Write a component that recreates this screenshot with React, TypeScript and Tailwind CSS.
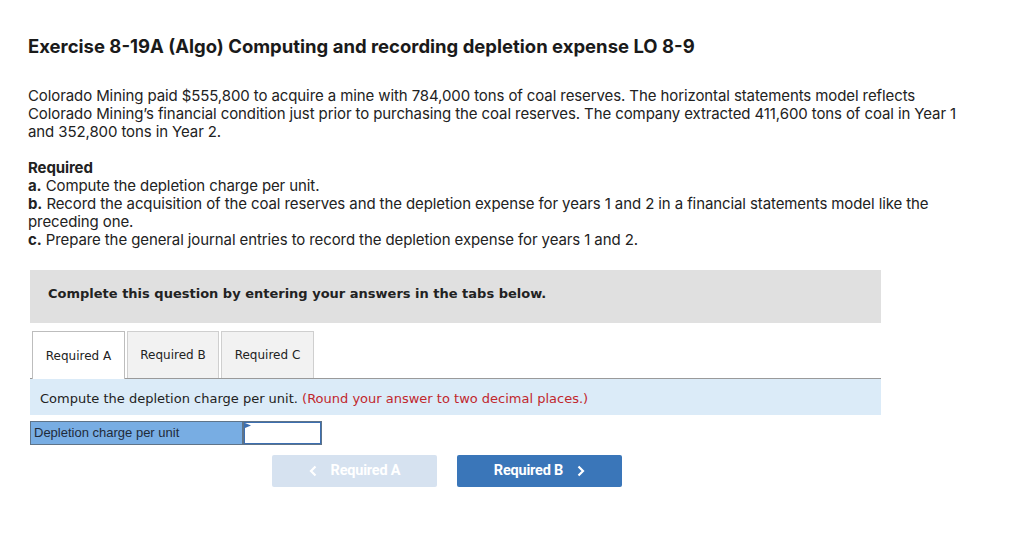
import React from "react";

const body = { fontFamily: 'Inter, "Lato", sans-serif' };
const verdana = { fontFamily: '"DejaVu Sans", Verdana, sans-serif' };

const App = () => {
	return (
		<div className="min-h-[555px] bg-white text-[#222]">
			<div className="pl-[28px] pr-[40px] pt-[34px]" style={body}>
				<h1 className="text-[18.5px] font-bold leading-[24px] text-[#1a1a1a]">
					Exercise 8-19A (Algo) Computing and recording depletion expense LO 8-9
				</h1>
				<p className="mt-[29px] text-[15px] leading-[18px] max-w-[935px] tracking-[-0.1px]">
					Colorado Mining paid $555,800 to acquire a mine with 784,000 tons of coal reserves. The horizontal statements model reflects Colorado Mining’s financial condition just prior to purchasing the coal reserves. The company extracted 411,600 tons of coal in Year 1 and 352,800 tons in Year 2.
				</p>
				<div className="mt-[18px] text-[15px] leading-[18px] max-w-[915px] tracking-[-0.1px]">
					<p className="font-bold">Required</p>
					<p>
						<span className="font-bold">a.</span> Compute the depletion charge per unit.
					</p>
					<p>
						<span className="font-bold">b.</span> Record the acquisition of the coal reserves and the depletion expense for years 1 and 2 in a financial statements model like the preceding one.
					</p>
					<p>
						<span className="font-bold">c.</span> Prepare the general journal entries to record the depletion expense for years 1 and 2.
					</p>
				</div>
			</div>

			<div className="ml-[30px] w-[851px]">
				<div
					className="mt-[21px] h-[53px] bg-[#e0e0e0] flex items-center pl-[18px] pb-[5px] text-[13px] font-bold text-[#222]"
					style={verdana}
				>
					Complete this question by entering your answers in the tabs below.
				</div>

				<div className="mt-[8px] flex gap-[2px] pl-[2px] border-b border-[#9a9a9a] text-[12px] text-[#222]" style={verdana}>
					<div className="w-[93px] h-[48px] flex items-center justify-center bg-white border border-b-0 border-[#bdbdbd] -mb-px">
						Required A
					</div>
					<div className="w-[92px] h-[47px] flex items-center justify-center bg-[#f2f2f2] border border-b-0 border-[#cfcfcf]">
						Required B
					</div>
					<div className="w-[93px] h-[47px] flex items-center justify-center bg-[#f2f2f2] border border-b-0 border-[#cfcfcf]">
						Required C
					</div>
				</div>

				<div className="h-[36px] bg-[#dbebf8] flex items-center pl-[10px] pt-[3px] text-[13px] text-[#222]" style={verdana}>
					Compute the depletion charge per unit.&nbsp;
					<span className="text-[#c1272d]">(Round your answer to two decimal places.)</span>
				</div>

				<div className="mt-[6px] flex h-[24px] w-[292px] border border-[#5f7489]">
					<div
						className="w-[213px] bg-[#78ade3] text-[13px] text-[#1f2b3a] flex items-center pl-[3px] border-r-2 border-[#5f7489]"
						style={{ fontFamily: '"Liberation Sans", Arial, sans-serif' }}
					>
						Depletion charge per unit
					</div>
					<div className="relative flex-1 bg-white border border-[#3d6fb1]">
						<svg className="absolute left-0 top-0" width="6" height="6" viewBox="0 0 6 6">
							<polygon points="0,0 6,2.5 0,5" fill="#3d6fb1" />
						</svg>
					</div>
				</div>

				<div className="mt-[10px] flex gap-[20px] pl-[242px]" style={{ fontFamily: 'Roboto, "Liberation Sans", sans-serif' }}>
					<button className="w-[165px] h-[32px] rounded-[2px] bg-[#d6e2f0] text-white text-[14.5px] font-bold flex items-center justify-center gap-[14px]">
						<svg width="8" height="12" viewBox="0 0 8 12">
							<path d="M6.5 1.5 L2 6 L6.5 10.5" stroke="white" strokeWidth="2.2" fill="none" />
						</svg>
						<span className="tracking-[-0.2px]">Required A</span>
					</button>
					<button className="w-[165px] h-[32px] rounded-[2px] bg-[#3a76b9] text-white text-[14.5px] font-bold flex items-center justify-center gap-[14px]">
						<span className="tracking-[-0.2px]">Required B</span>
						<svg width="8" height="12" viewBox="0 0 8 12">
							<path d="M1.5 1.5 L6 6 L1.5 10.5" stroke="white" strokeWidth="2.2" fill="none" />
						</svg>
					</button>
				</div>
			</div>
		</div>
	);
};

export default App;
